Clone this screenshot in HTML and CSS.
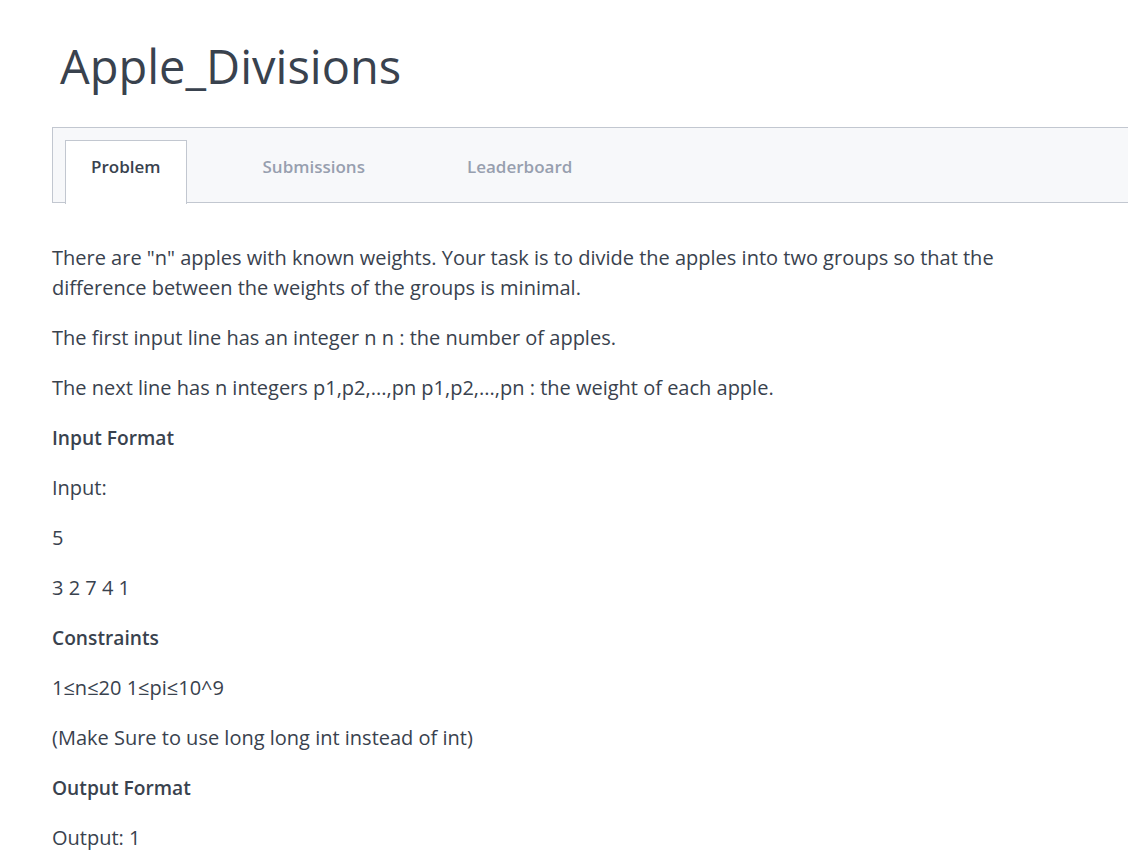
FILE: index.html
```html
<!DOCTYPE html>
<html lang="en">
<head>
    <meta charset="UTF-8">
    <title>Apple_Divisions</title>
    <link rel="stylesheet" href="styles.css">
</head>
<body>
    <div class="page">
        <h1 class="title">Apple_Divisions</h1>

        <div class="tabs">
            <a class="tab active" href="#">Problem</a>
            <a class="tab" href="#">Submissions</a>
            <a class="tab" href="#">Leaderboard</a>
        </div>

        <div class="statement">
            <p>There are "n" apples with known weights. Your task is to divide the apples into two groups so that the difference between the weights of the groups is minimal.</p>
            <p>The first input line has an integer n n : the number of apples.</p>
            <p>The next line has n integers p1,p2,...,pn p1,p2,...,pn : the weight of each apple.</p>
            <h3>Input Format</h3>
            <p>Input:</p>
            <p>5</p>
            <p>3 2 7 4 1</p>
            <h3>Constraints</h3>
            <p>1≤n≤20 1≤pi≤10^9</p>
            <p>(Make Sure to use long long int instead of int)</p>
            <h3>Output Format</h3>
            <p>Output: 1</p>
        </div>
    </div>
</body>
</html>
```

FILE: styles.css
```css
body {
    margin: 0;
    font-family: "Open Sans", sans-serif;
    color: #39424e;
    background: #fff;
}
.page {
    padding-left: 52px;
}
.title {
    font-size: 47px;
    font-weight: 400;
    margin: 0;
    padding: 32px 0 0 8px;
    line-height: 68px;
}
.tabs {
    display: flex;
    margin-top: 27px;
    padding-left: 12px;
    background: #f7f8fa;
    border: 1px solid #c2c7d0;
    border-right: none;
    box-sizing: border-box;
    height: 76px;
}
.tab {
    font-size: 17px;
    font-weight: 600;
    color: #979faf;
    text-decoration: none;
    padding: 0 25px;
    margin-right: 50px;
    margin-top: 12px;
    line-height: 52px;
    height: 64px;
    box-sizing: border-box;
    border: 1px solid transparent;
    border-bottom: none;
}
.tab.active {
    color: #39424e;
    background: #fff;
    border-color: #c2c7d0;
}
.statement {
    width: 1000px;
    padding-top: 40px;
    font-size: 20px;
    line-height: 30px;
}
.statement p,
.statement h3 {
    margin: 0 0 20px;
}
.statement h3 {
    font-size: 19.2px;
    font-weight: 600;
}
```
